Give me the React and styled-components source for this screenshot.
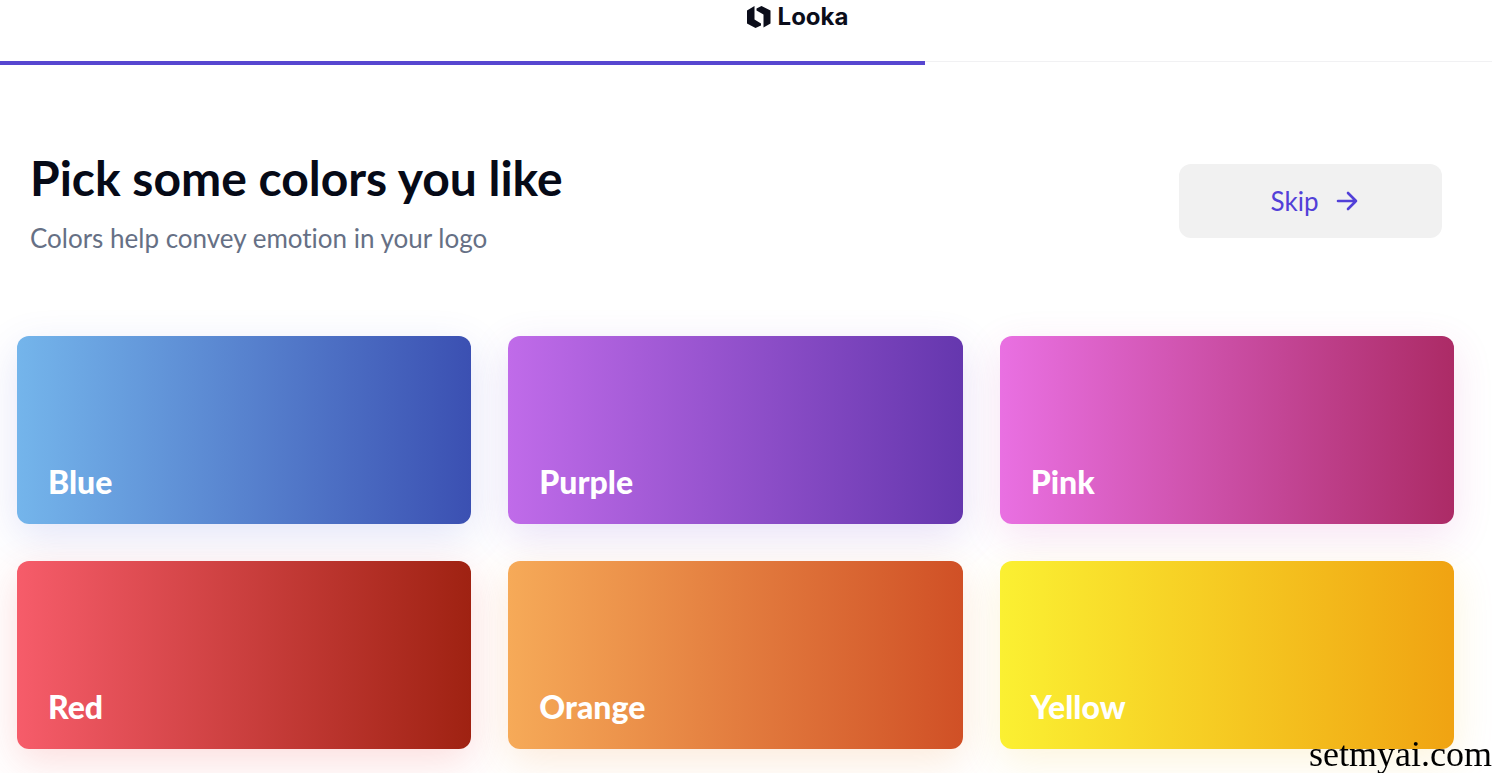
import React, { useState } from "react";
import styled, { createGlobalStyle } from "styled-components";

const GlobalStyle = createGlobalStyle`
  * {
    box-sizing: border-box;
  }

  body {
    margin: 0;
    background: #ffffff;
    font-family: Lato, "Liberation Sans", sans-serif;
    font-variant-ligatures: none;
    color: #060a17;
    overflow-x: hidden;
    scrollbar-width: none;
  }
`;

const Header = styled.header`
  display: flex;
  justify-content: center;
  height: 61px;
  padding: 4px 0 0 102px;
`;

const Brand = styled.a`
  display: flex;
  align-items: center;
  gap: 7px;
  height: 26px;
  color: #0b0d1a;
  font-family: Inter, "Liberation Sans", sans-serif;
  font-size: 24px;
  font-weight: 700;
  line-height: 26px;
  text-decoration: none;
`;

const Track = styled.div`
  height: 4px;
  border-top: 1px solid #f1f1f3;
`;

const Progress = styled.div`
  width: ${(props) => props.$value}%;
  height: 4px;
  margin-top: -1px;
  background: #5746d0;
`;

const Intro = styled.section`
  display: flex;
  align-items: center;
  justify-content: space-between;
  padding: 85px 50px 0 30px;
`;

const Title = styled.h1`
  margin: 0;
  font-size: 48px;
  font-weight: 700;
  line-height: 56px;
`;

const Subtitle = styled.p`
  margin: 18px 0 0;
  color: #667085;
  font-size: 26px;
  line-height: 28px;
`;

const SkipButton = styled.button`
  display: flex;
  align-items: center;
  justify-content: center;
  gap: 18px;
  width: 263px;
  height: 74px;
  padding: 0 0 0 8px;
  border: 0;
  border-radius: 12px;
  background: #f1f1f1;
  color: #5240d8;
  font-family: inherit;
  font-size: 26px;
  cursor: pointer;
`;

const Grid = styled.main`
  display: grid;
  grid-template-columns: repeat(3, 1fr);
  gap: 37px;
  padding: 84px 38px 37px 17px;
`;

const ColorCard = styled.button`
  display: flex;
  align-items: flex-end;
  height: 188px;
  padding: 0 31px 24px;
  border: 0;
  border-radius: 12px;
  background: linear-gradient(90deg, ${(props) => props.$from}, ${(props) => props.$to});
  box-shadow: 0 12px 40px ${(props) => props.$shadow};
  color: #ffffff;
  font-family: inherit;
  font-size: 32px;
  font-weight: 900;
  line-height: 36px;
  text-align: left;
  cursor: pointer;
`;

const Watermark = styled.div`
  position: fixed;
  right: 0;
  bottom: 0;
  color: #000000;
  font-family: "Liberation Serif", serif;
  font-size: 36px;
  line-height: 38px;
`;

const colors = [
  { name: "Blue", from: "#74b5eb", to: "#3b50b2", shadow: "rgba(80, 90, 210, 0.16)" },
  { name: "Purple", from: "#c06be9", to: "#6537ae", shadow: "rgba(110, 60, 200, 0.16)" },
  { name: "Pink", from: "#e970e2", to: "#ac2b66", shadow: "rgba(200, 60, 170, 0.14)" },
  { name: "Red", from: "#f65c6a", to: "#9f2212", shadow: "rgba(240, 60, 60, 0.18)" },
  { name: "Orange", from: "#f6aa58", to: "#d05026", shadow: "rgba(240, 140, 50, 0.18)" },
  { name: "Yellow", from: "#fbf032", to: "#f0a312", shadow: "rgba(240, 190, 40, 0.16)" },
];

const LogoMark = () => (
  <svg width="25" height="24" viewBox="0 0 25 24" fill="currentColor" aria-hidden="true">
    <path d="M8.500 1v13.500l6.500 4v2L9.500 23 1 18.500V5.500z" />
    <path d="M10.500 3.500 15.500 1 24.500 5.500v13L17.500 22.500V9.500L10.500 5.500z" />
  </svg>
);

const Arrow = () => (
  <svg
    width="22"
    height="20"
    viewBox="0 0 22 20"
    fill="none"
    stroke="currentColor"
    strokeWidth="2.6"
    strokeLinecap="round"
    strokeLinejoin="round"
    aria-hidden="true"
  >
    <path d="M2 10h18M12 2l8 8-8 8" />
  </svg>
);

const App = () => {
  const [picked, setPicked] = useState([]);

  const toggle = (name) => {
    setPicked(
      picked.includes(name) ? picked.filter((item) => item !== name) : [...picked, name]
    );
  };

  return (
    <>
      <GlobalStyle />
      <Header>
        <Brand href="/">
          <LogoMark />
          Looka
        </Brand>
      </Header>
      <Track>
        <Progress $value={62} />
      </Track>
      <Intro>
        <div>
          <Title>Pick some colors you like</Title>
          <Subtitle>Colors help convey emotion in your logo</Subtitle>
        </div>
        <SkipButton type="button">
          Skip
          <Arrow />
        </SkipButton>
      </Intro>
      <Grid>
        {colors.map((color) => (
          <ColorCard
            key={color.name}
            type="button"
            aria-pressed={picked.includes(color.name)}
            $from={color.from}
            $to={color.to}
            $shadow={color.shadow}
            onClick={() => toggle(color.name)}
          >
            {color.name}
          </ColorCard>
        ))}
      </Grid>
      <Watermark>setmyai.com</Watermark>
    </>
  );
};

export default App;
